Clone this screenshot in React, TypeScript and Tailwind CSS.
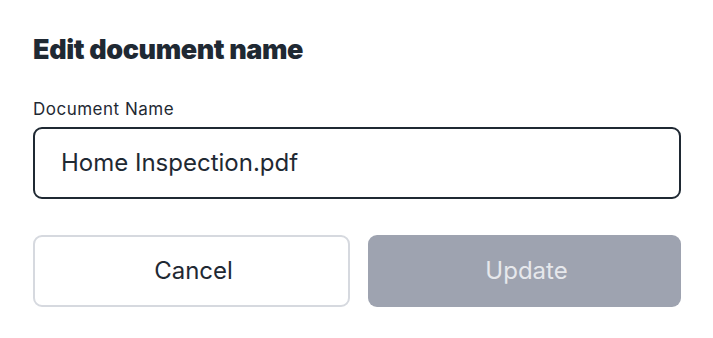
import React from "react";

export default function App() {
  return (
    <div className="w-[713px] h-[338px] bg-white px-[33px] pt-[34px] font-['Inter',sans-serif] text-[#1f2933]">
      <h2 className="text-[27px] leading-[32px] font-black tracking-[-0.4px]">Edit document name</h2>
      <div className="mt-[33px] text-[17px] leading-[20px] tracking-[0.5px]">Document Name</div>
      <div className="mt-[8px] h-[72px] w-[648px] rounded-[9px] border-2 border-[#1f2933] flex items-center px-[26px] text-[24px]">
        Home Inspection.pdf
      </div>
      <div className="mt-[36px] flex gap-[18px] w-[648px]">
        <button className="flex-1 h-[72px] pl-[4px] rounded-[9px] border-2 border-[#d6d9df] bg-white text-[24px] text-[#1f2933]">Cancel</button>
        <button className="flex-1 h-[72px] pl-[4px] rounded-[9px] bg-[#9ea3b0] text-[24px] text-[#e6e8ec]">Update</button>
      </div>
    </div>
  );
}
